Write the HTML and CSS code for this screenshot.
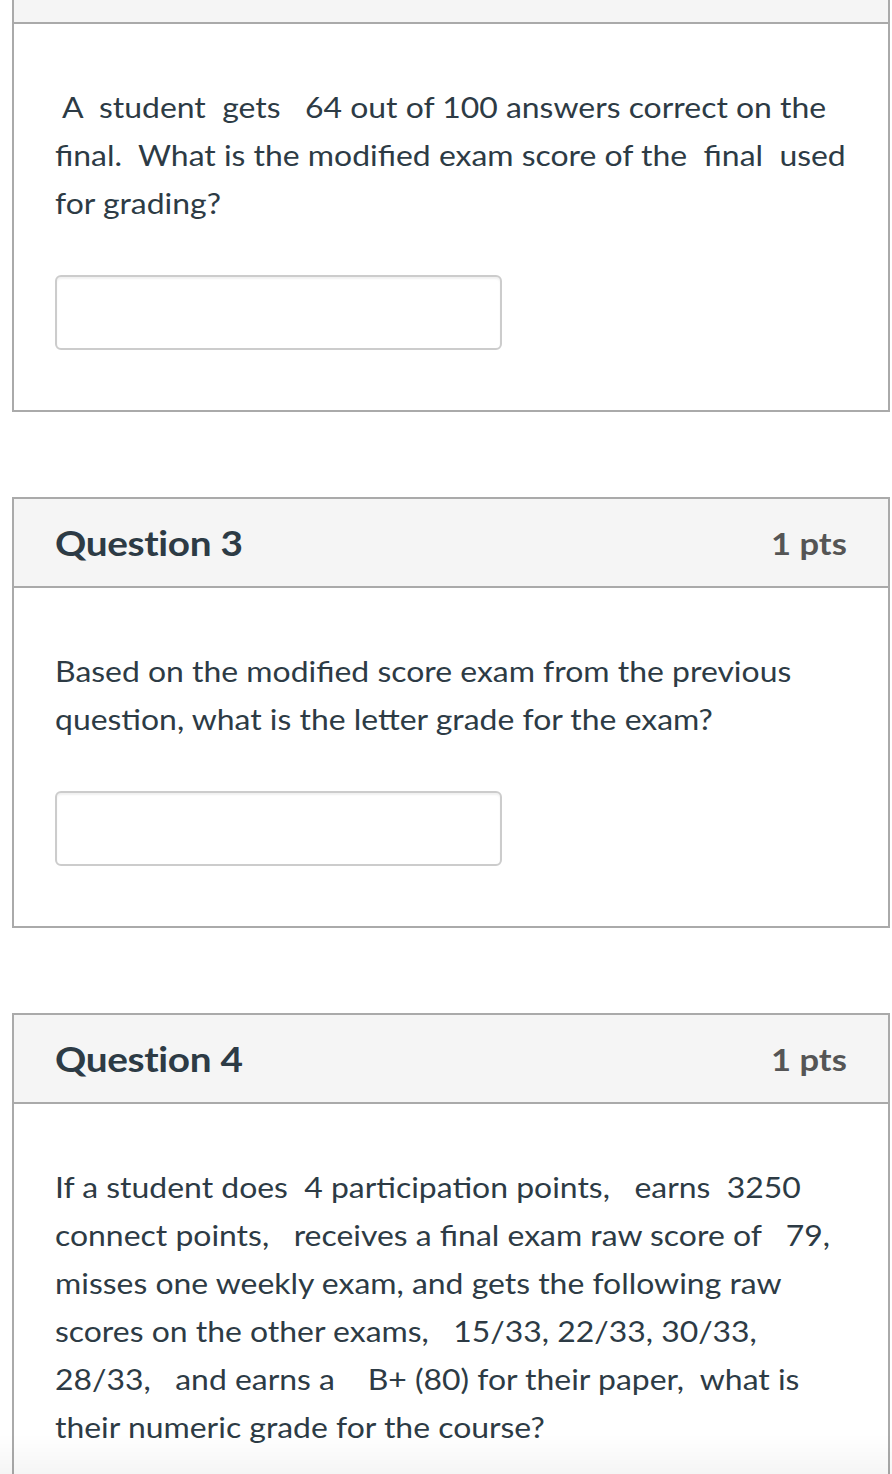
FILE: index.html
```html
<!DOCTYPE html>
<html>
<head>
<meta charset="utf-8">
<link rel="stylesheet" href="styles.css">
</head>
<body>
<div class="page">
  <section class="card card-partial">
    <div class="card-header short"></div>
    <div class="card-body">
      <p class="qtext">&nbsp;A&nbsp; student&nbsp; gets&nbsp;&nbsp; 64 out of 100 answers correct on the<br>final.&nbsp; What is the modified exam score of the&nbsp; final&nbsp; used<br>for grading?</p>
      <input class="answer" type="text">
    </div>
  </section>

  <section class="card">
    <div class="card-header">
      <h2 class="qtitle">Question 3</h2>
      <span class="pts">1 pts</span>
    </div>
    <div class="card-body">
      <p class="qtext">Based on the modified score exam from the previous<br>question, what is the letter grade for the exam?</p>
      <input class="answer" type="text">
    </div>
  </section>

  <section class="card">
    <div class="card-header">
      <h2 class="qtitle">Question 4</h2>
      <span class="pts">1 pts</span>
    </div>
    <div class="card-body">
      <p class="qtext">If a student does&nbsp; 4 participation points,&nbsp;&nbsp; earns&nbsp; 3250<br>connect points,&nbsp;&nbsp; receives a final exam raw score of&nbsp;&nbsp; 79,<br>misses one weekly exam, and gets the following raw<br>scores on the other exams,&nbsp;&nbsp; 15/33, 22/33, 30/33,<br>28/33,&nbsp;&nbsp; and earns a&nbsp;&nbsp;&nbsp; B+ (80) for their paper,&nbsp; what is<br>their numeric grade for the course?</p>
      <input class="answer" type="text">
    </div>
  </section>
</div>
<div class="bottom-fade"></div>
</body>
</html>
```

FILE: styles.css
```css
html, body {
  margin: 0;
  padding: 0;
  background: #ffffff;
}
body {
  font-family: Lato, "Open Sans", sans-serif;
  color: #2d3b45;
  overflow: hidden;
}
.page {
  padding-left: 12px;
  display: flex;
  flex-direction: column;
  gap: 85px;
}
.card {
  width: 874px;
  border: 2px solid #aaaaaa;
  background: #ffffff;
}
.card-partial {
  border-top: none;
}
.card-header {
  height: 87px;
  background: #f5f5f5;
  border-bottom: 2px solid #aaaaaa;
  display: flex;
  align-items: center;
  justify-content: space-between;
  padding: 0 41px 0 41px;
}
.card-header.short {
  height: 22px;
}
.qtitle {
  margin: 0;
  font-size: 34px;
  font-weight: 700;
  color: #2d3b45;
  letter-spacing: -0.3px;
  transform: scaleX(1.14);
  transform-origin: left center;
}
.pts {
  font-size: 30px;
  font-weight: 700;
  color: #555555;
  transform: scaleX(1.15);
  transform-origin: right center;
}
.card-body {
  padding: 59px 41px 60px 41px;
  display: flex;
  flex-direction: column;
  align-items: flex-start;
  gap: 48px;
}
.qtext {
  margin: 0;
  font-size: 28px;
  line-height: 48px;
  white-space: nowrap;
  transform: scaleX(1.14);
  transform-origin: left center;
}
.answer {
  box-sizing: border-box;
  width: 447px;
  height: 75px;
  margin: 0;
  border: 2px solid #cccccc;
  border-radius: 6px;
  background: #ffffff;
  box-shadow: inset 0 2px 2px rgba(0,0,0,0.06);
  font-family: Lato, sans-serif;
  font-size: 28px;
}
.bottom-fade {
  position: fixed;
  left: 0;
  right: 0;
  bottom: 0;
  height: 40px;
  background: linear-gradient(to bottom, rgba(0,0,0,0), rgba(0,0,0,0.04));
  pointer-events: none;
}
```
